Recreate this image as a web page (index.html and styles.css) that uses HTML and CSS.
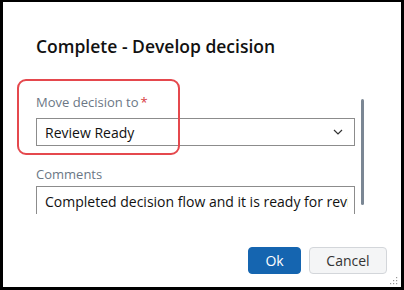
FILE: index.html
```html
<!DOCTYPE html>
<html>
<head>
<meta charset="utf-8">
<link rel="stylesheet" href="styles.css">
</head>
<body>
<div class="frame">
  <h2 class="title">Complete - Develop decision</h2>
  <div class="body">
    <div class="fields">
      <label class="label">Move decision to<span class="req">*</span></label>
      <div class="select">
        <span>Review Ready</span>
        <svg class="chev" width="10" height="6" viewBox="0 0 10 6"><path d="M1 1 L5 5 L9 1" fill="none" stroke="#333" stroke-width="1.2"/></svg>
      </div>
      <label class="label label2">Comments</label>
      <div class="textarea"><span class="ta-text">Completed decision flow and it is ready for review</span></div>
    </div>
    <div class="scrollbar"><div class="thumb"></div></div>
  </div>
  <div class="footer">
    <button class="btn ok">Ok</button>
    <button class="btn cancel">Cancel</button>
  </div>
  <div class="highlight"></div>
  <svg class="grip" width="8" height="8" viewBox="0 0 8 8">
    <rect x="6" y="0" width="1.2" height="1.2" fill="#999"/>
    <rect x="3" y="3" width="1.2" height="1.2" fill="#999"/>
    <rect x="6" y="3" width="1.2" height="1.2" fill="#999"/>
    <rect x="0" y="6" width="1.2" height="1.2" fill="#999"/>
    <rect x="3" y="6" width="1.2" height="1.2" fill="#999"/>
    <rect x="6" y="6" width="1.2" height="1.2" fill="#999"/>
  </svg>
</div>
</body>
</html>
```
FILE: styles.css
```css
html, body {
  margin: 0;
  padding: 0;
  background: #000;
}
.frame {
  position: relative;
  width: 404px;
  height: 290px;
  box-sizing: border-box;
  border-style: solid;
  border-color: #000;
  border-width: 2px 3px 3px 3px;
  background: #fff;
  font-family: "Open Sans", Lato, sans-serif;
  padding: 0 0 0 33px;
  overflow: hidden;
}
.title {
  margin: 0;
  padding-top: 33px;
  font-size: 17.5px;
  line-height: 22px;
  font-weight: 600;
  color: #111;
}
.body {
  display: flex;
  margin-top: 33px;
  height: 124px;
  overflow: hidden;
}
.fields {
  width: 319px;
  flex-shrink: 0;
  display: flex;
  flex-direction: column;
}
.fields > * {
  flex-shrink: 0;
}
.label {
  font-size: 13px;
  line-height: 16px;
  color: #6b7785;
  margin-top: 4px;
}
.req {
  color: #d7393e;
  margin-left: 2px;
}
.label2 {
  margin-top: 20px;
}
.select {
  margin-top: 8px;
  height: 28px;
  box-sizing: border-box;
  border: 1px solid #8c8c8c;
  display: flex;
  align-items: center;
  justify-content: space-between;
  padding: 0 11px 0 8px;
  font-size: 14px;
  color: #111;
}
.chev {
  display: block;
}
.textarea {
  margin-top: 4px;
  height: 40px;
  box-sizing: border-box;
  border: 1px solid #8c8c8c;
  padding: 5px 6px 0 8px;
  font-size: 14px;
  line-height: 20px;
  color: #111;
  white-space: nowrap;
}
.ta-text {
  display: block;
  overflow: hidden;
}
.scrollbar {
  margin-left: 6px;
  width: 3px;
  flex-shrink: 0;
}
.thumb {
  margin-top: 9px;
  height: 106px;
  width: 3px;
  border-radius: 2px;
  background: #7b8794;
}
.footer {
  display: flex;
  justify-content: flex-end;
  gap: 8px;
  margin-top: 33px;
  padding-right: 14px;
}
.btn {
  height: 27px;
  box-sizing: border-box;
  font-family: "Open Sans", Lato, sans-serif;
  font-size: 14px;
  border-radius: 4px;
  padding: 0;
}
.ok {
  width: 53px;
  background: #1565b0;
  border: 1px solid #1565b0;
  color: #fff;
}
.cancel {
  width: 78px;
  background: #f4f5f6;
  border: 1px solid #d3d6da;
  color: #333;
}
.highlight {
  position: absolute;
  left: 14px;
  top: 77px;
  width: 163px;
  height: 76px;
  box-sizing: border-box;
  border: 2px solid #e5484d;
  border-radius: 9px;
}
.grip {
  position: absolute;
  right: 3px;
  bottom: 2px;
}
```
